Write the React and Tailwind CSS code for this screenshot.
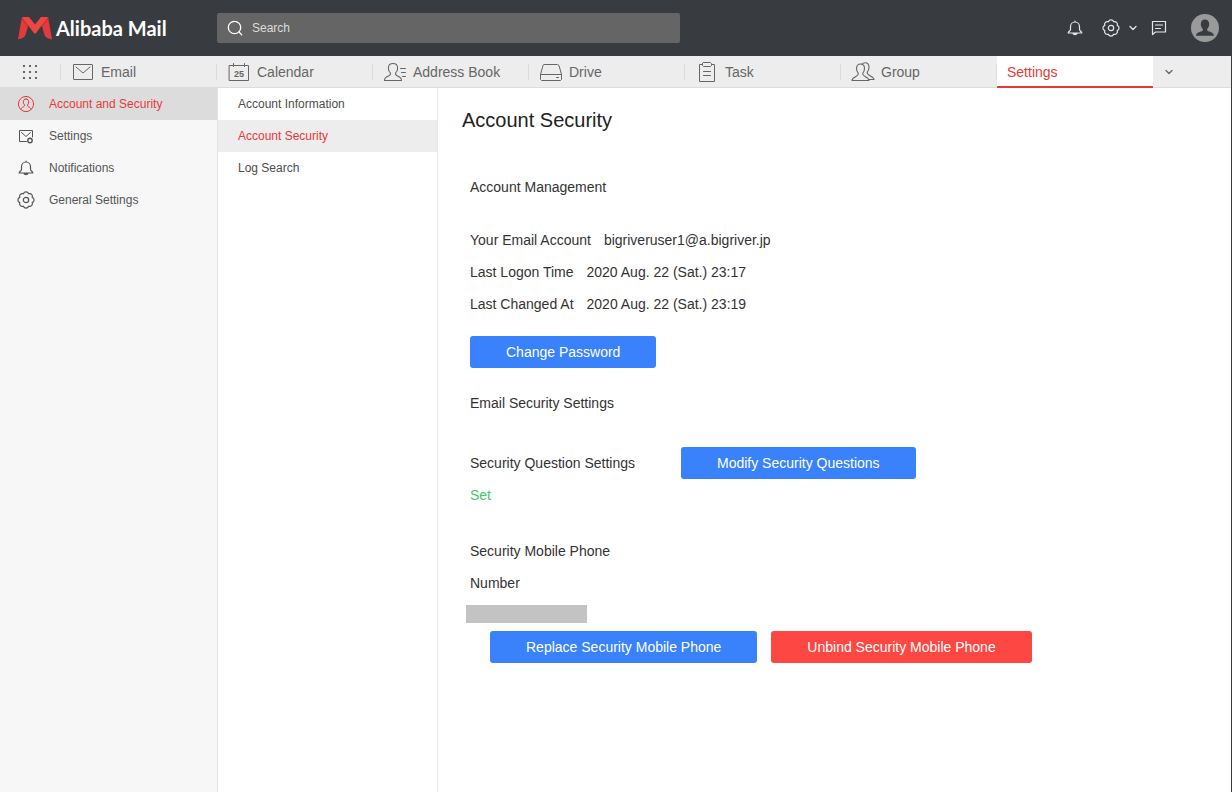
import React from "react";

const stroke = {
  fill: "none",
  stroke: "currentColor",
  strokeLinejoin: "round",
  strokeLinecap: "round",
};

function Logo() {
  return (
    <svg width="34" height="24" viewBox="0 0 34 24" aria-hidden="true">
      <path d="M4 1 0 23.300c4.200-.5 6.800-1.800 7.500-4.500L10.300 9.200z" fill="#e53a3a" />
      <path d="M30 1l4 22.300c-4.200-.5-6.800-1.800-7.500-4.500L23.700 9.200z" fill="#e53a3a" />
      <path d="M4 1 10.500 9.400 9.800 11.600 3.700 3.400z" fill="#cf3335" />
      <path d="M30 1 23.500 9.400 24.200 11.600 30.300 3.400z" fill="#cf3335" />
      <path d="M4 1h7L17 8.500 23 1h7L17.700 17.500h-1.400z" fill="#ef4543" />
    </svg>
  );
}

function SearchIcon() {
  return (
    <svg width="16" height="16" viewBox="0 0 16 16" {...stroke} strokeWidth="1.300" aria-hidden="true">
      <circle cx="7.500" cy="7.500" r="6.200" />
      <path d="m12 12 2.700 2.700" />
    </svg>
  );
}

function BellIcon() {
  return (
    <svg width="16" height="16" viewBox="0 0 16 16" {...stroke} strokeWidth="1.200" aria-hidden="true">
      <path d="M8 1v1M3.500 9.500V6.800a4.500 4.800 0 0 1 9 0v2.700c0 1.200 2.300 1.800 2.300 3.500H1.200c0-1.700 2.300-2.300 2.300-3.500z" />
      <path d="M6 13.500c.5 1.400 3.500 1.400 4 0z" />
    </svg>
  );
}

function GearIcon() {
  return (
    <svg width="18" height="18" viewBox="0 0 18 18" {...stroke} strokeWidth="1.200" aria-hidden="true">
      <path d="M6.400 2.800a2.750 2.750 0 0 1 5.200 0a2.750 2.750 0 0 1 3.600 3.600a2.750 2.750 0 0 1 0 5.200a2.750 2.750 0 0 1-3.600 3.600a2.750 2.750 0 0 1-5.200 0a2.750 2.750 0 0 1-3.600-3.600a2.750 2.750 0 0 1 0-5.200a2.750 2.750 0 0 1 3.600-3.600z" />
      <circle cx="9" cy="9" r="2.700" />
    </svg>
  );
}

function ChevronIcon() {
  return (
    <svg width="8" height="6" viewBox="0 0 8 6" {...stroke} strokeWidth="1.300" aria-hidden="true">
      <path d="m1 1.500 3 3 3-3" />
    </svg>
  );
}

function MessageIcon() {
  return (
    <svg width="16" height="16" viewBox="0 0 16 16" {...stroke} strokeWidth="1.200" aria-hidden="true">
      <path d="M1.500 1.500h13v10.500H4.500l-3 2.500zM4.500 5h7M4.500 8.500h5" />
    </svg>
  );
}

function Avatar() {
  return (
    <svg width="28" height="28" viewBox="0 0 28 28" aria-hidden="true">
      <circle cx="14" cy="14" r="14" fill="#9a9a9a" />
      <path
        d="M14 5.500c2.700 0 4.200 1.900 4.200 4.500 0 2-.8 3.800-2 4.900-.3 1.600.3 2 2 2.600 2.600.9 4.500 1.400 4.800 4.300H5c.3-2.900 2.200-3.400 4.800-4.300 1.700-.6 2.300-1 2-2.600-1.200-1.100-2-2.900-2-4.900 0-2.600 1.500-4.500 4.200-4.500z"
        fill="#383c40"
      />
    </svg>
  );
}

function AppsIcon() {
  return (
    <svg width="16" height="16" viewBox="0 0 16 16" fill="currentColor" aria-hidden="true">
      {[1, 7, 13].map((y) =>
        [1, 7, 13].map((x) => <rect key={`${x}-${y}`} x={x} y={y} width="2" height="2" />)
      )}
    </svg>
  );
}

function EmailIcon() {
  return (
    <svg width="24" height="20" viewBox="0 0 24 20" {...stroke} aria-hidden="true">
      <rect x="2.500" y="2.500" width="19" height="15" rx="0.500" />
      <path d="m5 5 7 6 7-6" />
    </svg>
  );
}

function CalendarIcon() {
  return (
    <svg width="24" height="20" viewBox="0 0 24 20" {...stroke} aria-hidden="true">
      <path d="M2.500 3.500h19v15h-19zM6.500 1.500v3M17.500 1.500v3" />
      <text
        x="12"
        y="14.500"
        textAnchor="middle"
        fontSize="9"
        fontWeight="700"
        fontFamily="Liberation Sans, sans-serif"
        fill="currentColor"
        stroke="none"
      >
        25
      </text>
    </svg>
  );
}

function AddressIcon() {
  return (
    <svg width="24" height="20" viewBox="0 0 24 20" {...stroke} strokeWidth="1.100" aria-hidden="true">
      <path d="M10 1.500c-3 0-4.600 2-4.600 4.700 0 2 .8 3.800 2.100 4.900.2 2-.7 2.500-2.500 3.200-2.300.9-3.500 1.600-3.500 4.200h17c0-2.600-1.200-3.300-3.500-4.200-1.800-.7-2.700-1.200-2.500-3.200 1.300-1.100 2.100-2.900 2.100-4.900 0-2.700-1.600-4.700-4.600-4.700z" />
      <path d="M17.500 6.500h5M18.500 10.500h4M19.500 14.500h3" />
    </svg>
  );
}

function DriveIcon() {
  return (
    <svg width="24" height="20" viewBox="0 0 24 20" {...stroke} aria-hidden="true">
      <path d="M5.500 2.500h13l1.500 1 2.500 9v5l-1 1h-19l-1-1v-5l2.500-9zM1.700 12.500h20.600M17.500 15.500h2" />
    </svg>
  );
}

function TaskIcon() {
  return (
    <svg width="24" height="20" viewBox="0 0 24 20" {...stroke} aria-hidden="true">
      <path d="M7.500 2.500h-3v17h15v-17h-3M8.500 .5h7l1 1v2l-1 1h-7l-1-1v-2zM8.500 9.500h7M8.500 13.500h7" />
    </svg>
  );
}

function GroupIcon() {
  return (
    <svg width="24" height="20" viewBox="0 0 24 20" {...stroke} strokeWidth="1.100" aria-hidden="true">
      <path d="M9.500 2c-2.600 0-4 1.900-4 4.400 0 2 .7 3.800 1.800 4.900.2 1.700-.6 2.400-2.300 3.200C2.500 15.700 1 16.500 1 18.500h17c0-2-1.500-2.800-4-4-1.700-.8-2.500-1.500-2.300-3.200 1.100-1.100 1.800-2.900 1.800-4.900 0-2.500-1.400-4.400-4-4.400z" />
      <path d="M11 2.200c.8-.9 1.900-1.400 3-1.400 2.600 0 4 1.900 4 4.400 0 2-.7 3.800-1.800 4.900-.2 2 .6 2.500 2.800 3.600 2.600 1.300 4 2 4 3.800h-5" />
    </svg>
  );
}

function AccountIcon() {
  return (
    <svg width="18" height="18" viewBox="0 0 18 18" {...stroke} aria-hidden="true">
      <circle cx="9" cy="9" r="7.600" />
      <path d="M9 4C7.200 4 6.300 5.200 6.300 6.900c0 1.400.5 2.400 1.300 3.100 0 1.100-.5 1.500-1.600 2-1 .5-1.700.9-2 2.200M9 4c1.800 0 2.700 1.200 2.700 2.900 0 1.400-.5 2.400-1.300 3.100 0 1.100.5 1.500 1.600 2 1 .5 1.700.9 2 2.200" />
    </svg>
  );
}

function MailSettingsIcon() {
  return (
    <svg width="18" height="18" viewBox="0 0 18 18" {...stroke} aria-hidden="true">
      <path d="M9.500 14.500h-7v-11h13v6.500M4.500 5.500l4.500 4 4.500-4" />
      <circle cx="13" cy="13.500" r="2.200" strokeWidth="1.400" />
    </svg>
  );
}

const tabs = [
  { label: "Email", Icon: EmailIcon },
  { label: "Calendar", Icon: CalendarIcon },
  { label: "Address Book", Icon: AddressIcon },
  { label: "Drive", Icon: DriveIcon },
  { label: "Task", Icon: TaskIcon },
  { label: "Group", Icon: GroupIcon },
];

const sections = [
  { label: "Account and Security", Icon: AccountIcon, active: true },
  { label: "Settings", Icon: MailSettingsIcon },
  { label: "Notifications", Icon: BellIcon },
  { label: "General Settings", Icon: GearIcon },
];

const pages = [
  { label: "Account Information" },
  { label: "Account Security", active: true },
  { label: "Log Search" },
];

const details = [
  ["Your Email Account", "bigriveruser1@a.bigriver.jp"],
  ["Last Logon Time", "2020 Aug. 22 (Sat.) 23:17"],
  ["Last Changed At", "2020 Aug. 22 (Sat.) 23:19"],
];

function Button({ danger, children }) {
  return (
    <button
      type="button"
      className={`h-8 shrink-0 rounded-[3px] px-9 whitespace-nowrap text-white ${danger ? "bg-[#fc4742]" : "bg-[#3982fc]"}`}
    >
      {children}
    </button>
  );
}

function Header() {
  return (
    <header className="flex h-14 items-center bg-[#383c40] pr-3 text-white">
      <a href="#home" className="flex w-[217px] shrink-0 items-center gap-1 pl-[18px]">
        <Logo />
        <span className="font-[Lato,sans-serif] text-[20px] leading-6 font-bold whitespace-nowrap">Alibaba Mail</span>
      </a>
      <label className="flex h-[30px] max-w-[463px] flex-1 items-center gap-[9px] rounded-[2px] bg-[#656565] px-[10px]">
        <SearchIcon />
        <input
          type="search"
          aria-label="Search"
          placeholder="Search"
          className="min-w-0 flex-1 bg-transparent text-xs text-white outline-none placeholder:text-[#dcdcdc]"
        />
      </label>
      <div className="ml-auto flex items-center text-[#e6e6e6]">
        <button type="button" aria-label="Notifications" className="mr-[19px]">
          <BellIcon />
        </button>
        <button type="button" aria-label="Settings menu" className="mr-[14px] flex items-center gap-[9px]">
          <GearIcon />
          <ChevronIcon />
        </button>
        <button type="button" aria-label="Messages" className="mr-6">
          <MessageIcon />
        </button>
        <button type="button" aria-label="Profile">
          <Avatar />
        </button>
      </div>
    </header>
  );
}

function TabBar() {
  return (
    <nav aria-label="Applications" className="flex h-8 bg-[#ededed] text-sm text-[#666]">
      <div className="flex w-[61px] shrink-0 items-center border-b border-[#dcdcdc] pl-[22px]">
        <button type="button" aria-label="All applications">
          <AppsIcon />
        </button>
        <span className="ml-auto h-4 w-px bg-[#dcdcdc]" />
      </div>
      {tabs.map(({ label, Icon }) => (
        <a
          key={label}
          href={`#${label.toLowerCase().replace(" ", "-")}`}
          className="flex w-[156px] items-center border-b border-[#dcdcdc] pl-[10px] whitespace-nowrap"
        >
          <Icon />
          <span className="ml-[6px]">{label}</span>
          <span className="ml-auto h-4 w-px bg-[#dcdcdc]" />
        </a>
      ))}
      <a
        href="#settings"
        aria-current="page"
        className="flex w-[156px] items-center border-b-2 border-[#e33b37] bg-white pt-px pl-[10px] text-[#e33b37]"
      >
        Settings
      </a>
      <div className="flex flex-1 items-center border-b border-[#dcdcdc] pl-3">
        <button type="button" aria-label="More tabs">
          <ChevronIcon />
        </button>
      </div>
    </nav>
  );
}

export default function App() {
  return (
    <div className="flex min-h-screen flex-col border-r border-[#383c40] bg-white font-['Liberation_Sans',Arial,sans-serif] text-sm text-[#333]">
      <Header />
      <TabBar />
      <div className="flex flex-1">
        <nav aria-label="Settings sections" className="w-[218px] shrink-0 border-r border-[#e3e3e3] bg-[#f7f7f7] text-xs">
          {sections.map(({ label, Icon, active }) => (
            <a
              key={label}
              href={`#${label.toLowerCase().replaceAll(" ", "-")}`}
              className={`flex h-8 items-center pl-[17px] ${active ? "bg-[#dcdcdc] text-[#e8393c]" : "text-[#555]"}`}
            >
              <span className="mr-[14px] flex w-[18px] justify-center">
                <Icon />
              </span>
              {label}
            </a>
          ))}
        </nav>
        <nav aria-label="Account pages" className="w-[220px] shrink-0 border-r border-[#e8e8e8] text-xs">
          {pages.map(({ label, active }) => (
            <a
              key={label}
              href={`#${label.toLowerCase().replaceAll(" ", "-")}`}
              className={`flex h-8 items-center pl-5 ${active ? "bg-[#ededed] text-[#e8393c]" : "text-[#4d4d4d]"}`}
            >
              {label}
            </a>
          ))}
        </nav>
        <main className="min-w-0 flex-1 px-6 pt-4 leading-8">
          <h1 className="text-xl leading-8 text-[#222]">Account Security</h1>
          <section className="mt-[35px] pl-2">
            <h2 className="mb-[21px]">Account Management</h2>
            <dl className="mb-4">
              {details.map(([term, value]) => (
                <div key={term} className="flex gap-[13px]">
                  <dt>{term}</dt>
                  <dd>{value}</dd>
                </div>
              ))}
            </dl>
            <Button>Change Password</Button>
          </section>
          <section className="mt-[19px] pl-2">
            <h2 className="mb-7">Email Security Settings</h2>
            <div className="flex">
              <h3 className="w-[211px]">Security Question Settings</h3>
              <Button>Modify Security Questions</Button>
            </div>
            <p className="text-[#42c968]">Set</p>
          </section>
          <section className="mt-6">
            <h3 className="w-[180px] pl-2">Security Mobile Phone Number</h3>
            <div className="mt-[6px] mb-2 ml-1 h-[18px] w-[121px] bg-[#c3c3c3]" />
            <div className="flex gap-[14px] pl-7">
              <Button>Replace Security Mobile Phone</Button>
              <Button danger>Unbind Security Mobile Phone</Button>
            </div>
          </section>
        </main>
      </div>
    </div>
  );
}
